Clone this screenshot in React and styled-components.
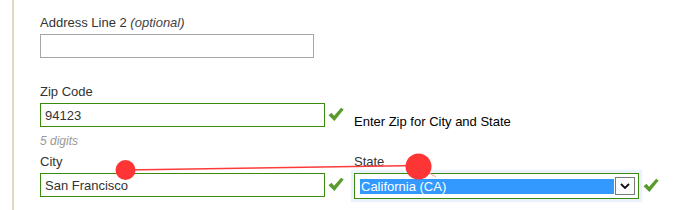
import React from 'react'
import styled, { createGlobalStyle } from 'styled-components'

const GlobalStyle = createGlobalStyle`
    body{
        margin: 0;
        background: #fff;
        font-family: "Liberation Sans", Arial, sans-serif;
    }
`;

function Check() {
    return (
        <CheckIcon viewBox="0 0 15 14" width="16" height="15">
            <path d="M0.5 7.6 L3.3 5.4 L5.7 8.2 L12.3 0.6 L14.7 2.2 L6 13 Z" />
        </CheckIcon>
    )
}

function Field({ label, optional, value, valid, hint, wide }) {
    return (
        <FieldStyled>
            <Label>
                {label} {optional && <em>(optional)</em>}
            </Label>
            <InputRow>
                <TextInput $valid={valid} $wide={wide} value={value} readOnly />
                {valid && <Check />}
            </InputRow>
            {hint && <Hint>{hint}</Hint>}
        </FieldStyled>
    )
}

function App() {
    return (
        <Page>
            <GlobalStyle />
            <Panel>
                <Form>
                    <FullRow>
                        <Field label="Address Line 2" optional value="" />
                    </FullRow>
                    <Field label="Zip Code" value="94123" valid wide hint="5 digits" />
                    <Message>Enter Zip for City and State</Message>
                    <Field label="City" value="San Francisco" valid wide />
                    <FieldStyled>
                        <Label>State</Label>
                        <InputRow>
                            <Select>
                                <Selected>California (CA)</Selected>
                                <DropButton>
                                    <svg viewBox="0 0 10 6" width="10" height="6">
                                        <path d="M1 1 L5 5 L9 1" fill="none" stroke="#111" strokeWidth="1.8" />
                                    </svg>
                                </DropButton>
                            </Select>
                            <Check />
                        </InputRow>
                    </FieldStyled>
                </Form>
            </Panel>
            <Overlay viewBox="0 0 690 210" width="690" height="210">
                <line x1="125.5" y1="170" x2="418.5" y2="165.5" stroke="#ff3a3a" strokeWidth="1.3" />
                <line x1="418.5" y1="166.5" x2="436" y2="177" stroke="#ff9a9a" strokeWidth="1" />
                <circle cx="125.5" cy="170" r="10" fill="#ff3535" />
                <circle cx="418.5" cy="166.5" r="13" fill="#ff3535" />
            </Overlay>
        </Page>
    )
}

const Page = styled.div`
    position: relative;
    width: 690px;
    height: 210px;
    overflow: hidden;
`;

const Panel = styled.div`
    margin-left: 12px;
    border-left: 2px solid #e5d5c1;
    height: 210px;
    padding: 15px 0 0 26px;
    box-sizing: border-box;
`;

const Form = styled.div`
    display: grid;
    grid-template-columns: 314px 1fr;
`;

const FullRow = styled.div`
    grid-column: 1 / -1;
    margin-bottom: 26px;
`;

const FieldStyled = styled.div`
    display: flex;
    flex-direction: column;
`;

const Label = styled.label`
    display: block;
    font-size: 13px;
    line-height: 15px;
    color: #333;
    margin-bottom: 4px;
    em{
        color: #444;
    }
`;

const InputRow = styled.div`
    display: flex;
    align-items: center;
    gap: 3px;
`;

const TextInput = styled.input`
    box-sizing: border-box;
    width: ${props => props.$wide ? '285px' : '274px'};
    height: 24px;
    margin: 0;
    padding: 0 4px;
    border: 1px solid ${props => props.$valid ? '#3a8a0c' : '#a6a6a6'};
    border-radius: 0;
    outline: none;
    font-family: "Liberation Sans", Arial, sans-serif;
    font-size: 13px;
    color: #333;
    background: #fff;
`;

const CheckIcon = styled.svg`
    flex: none;
    fill: #5a9a2e;
    margin-top: -2px;
`;

const Hint = styled.div`
    font-size: 12px;
    line-height: 14px;
    font-style: italic;
    color: #999;
    margin: 7px 0 6px;
`;

const Message = styled.div`
    font-size: 13px;
    line-height: 15px;
    color: #000;
    padding-top: 30px;
`;

const Select = styled.div`
    box-sizing: border-box;
    width: 285px;
    height: 26px;
    display: flex;
    align-items: center;
    gap: 1px;
    padding: 0 3px 0 5px;
    border: 1px solid #3a8a0c;
    box-shadow: 0 0 1px 3px #ebf2fb;
    background: #fff;
    font-size: 13px;
    margin-right: 1px;
`;

const Selected = styled.span`
    flex: 1;
    height: 15px;
    line-height: 15px;
    padding-left: 1px;
    background: #3399ff;
    color: #fff;
`;

const DropButton = styled.span`
    box-sizing: border-box;
    width: 20px;
    height: 18px;
    display: flex;
    align-items: center;
    justify-content: center;
    border: 1px solid #7a7a7a;
    background: #fdfdfd;
`;

const Overlay = styled.svg`
    position: absolute;
    top: 0;
    left: 0;
    pointer-events: none;
`;

export default App
